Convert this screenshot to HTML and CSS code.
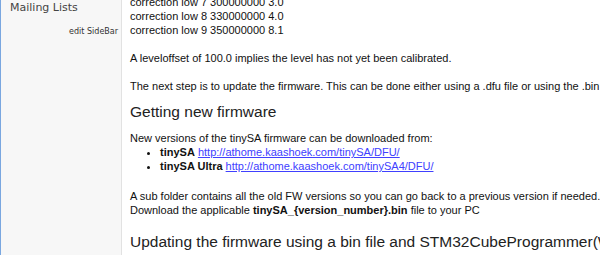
FILE: index.html
```html
<!DOCTYPE html>
<html lang="en">
<head>
  <meta charset="UTF-8">
  <title>tinySA - Updating firmware</title>
  <link rel="stylesheet" href="styles.css">
</head>
<body>
  <div class="page">
    <div class="sidebar">
      <a class="side-link" href="#">Mailing Lists</a>
      <div class="edit-side"><a href="#">edit SideBar</a></div>
    </div>
    <div class="content">
      <p>correction low 7 300000000 3.0<br>
      correction low 8 330000000 4.0<br>
      correction low 9 350000000 8.1</p>
      <p>A leveloffset of 100.0 implies the level has not yet been calibrated.</p>
      <p>The next step is to update the firmware. This can be done either using a .dfu file or using the .bin file</p>
      <h2>Getting new firmware</h2>
      <p class="tight">New versions of the tinySA firmware can be downloaded from:</p>
      <ul>
        <li><strong>tinySA</strong> <a href="#">http://athome.kaashoek.com/tinySA/DFU/</a></li>
        <li><strong>tinySA Ultra</strong> <a href="#">http://athome.kaashoek.com/tinySA4/DFU/</a></li>
      </ul>
      <p>A sub folder contains all the old FW versions so you can go back to a previous version if needed.<br>
      Download the applicable <strong>tinySA_{version_number}.bin</strong> file to your PC</p>
      <h2 class="next">Updating the firmware using a bin file and STM32CubeProgrammer(Windows)</h2>
    </div>
  </div>
</body>
</html>
```
FILE: styles.css
```css
body {
  margin: 0;
  background-color: #fff;
  font-family: "Liberation Sans", Arial, sans-serif;
  overflow: hidden;
}

.page {
  display: flex;
  height: 255px;
  border-left: 1px solid #7aa7e0;
}

.sidebar {
  width: 120px;
  flex-shrink: 0;
  background-color: #f7f7f7;
  border-right: 1px solid #e2e2e2;
  padding-top: 1px;
}

.side-link {
  display: block;
  padding-left: 9px;
  font-family: "DejaVu Sans", Verdana, sans-serif;
  font-size: 11px;
  color: #444;
  text-decoration: none;
}

.edit-side {
  text-align: right;
  margin-top: 6px;
  padding-right: 3px;
}

.edit-side a {
  font-family: "DejaVu Sans", Verdana, sans-serif;
  font-size: 8px;
  color: #333;
  text-decoration: none;
}

.content {
  flex: 1;
  min-width: 0;
  overflow: hidden;
  padding-left: 8px;
  margin-top: -5px;
  font-size: 11px;
  line-height: 14px;
  color: #111;
  white-space: nowrap;
}

.content p {
  margin: 0 0 14px 0;
}

.content p.tight {
  margin-bottom: 0;
}

.content h2 {
  font-weight: normal;
  font-size: 15.5px;
  line-height: 22px;
  color: #222;
  margin: -6px 0 8px 0;
}

.content h2.next {
  margin-top: 0;
}

.content ul {
  margin: 0 0 16px 0;
  padding-left: 30px;
}

.content a {
  color: #4040ff;
}
```
